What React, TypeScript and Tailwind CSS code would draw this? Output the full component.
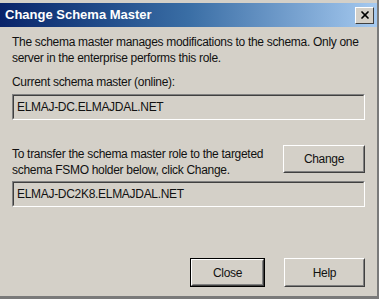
import { X } from 'lucide-react';

function Field({ value }: { value: string }) {
  return (
    <div className="h-[26px] border border-t-[#808080] border-l-[#808080] border-b-white border-r-white">
      <div className="flex h-full items-center border border-t-[#404040] border-l-[#404040] border-b-[#d4d0c8] border-r-[#d4d0c8] px-[3px] text-[12px] tracking-[-0.3px] text-[#111]">
        {value}
      </div>
    </div>
  );
}

function Btn({ label, isDefault = false, className = '' }: { label: string; isDefault?: boolean; className?: string }) {
  const inner = (
    <div className="h-full border border-t-white border-l-white border-b-[#404040] border-r-[#404040]">
      <div className="flex h-full items-center justify-center border border-t-[#d4d0c8] border-l-[#d4d0c8] border-b-[#808080] border-r-[#808080] text-[12px] tracking-[-0.3px] text-[#111]">
        {label}
      </div>
    </div>
  );
  return (
    <div className={className}>
      {isDefault ? <div className="h-full border border-black">{inner}</div> : inner}
    </div>
  );
}

export default function App() {
  return (
    <div className="h-[299px] w-[381px] bg-white font-['Liberation_Sans',Arial,sans-serif]">
      <div className="flex h-full w-[379px] flex-col border-r-2 border-b-[3px] border-r-[#7a7a7a] border-b-[#7a7a7a] bg-[#d4d0c8] pt-[3px]">
        <div className="flex h-[24px] items-center justify-between bg-gradient-to-r from-[#0a246a] via-[#3a6ea5] to-[#a6caf0] pl-[5px] pr-[3px]">
          <span className="text-[13px] font-bold text-white">Change Schema Master</span>
          <div className="h-[17px] w-[19px] border border-t-white border-l-white border-b-[#404040] border-r-[#404040] bg-[#d4d0c8]">
            <div className="flex h-full items-center justify-center">
              <X className="h-[12px] w-[12px] text-black" strokeWidth={3.5} />
            </div>
          </div>
        </div>

        <div className="flex flex-1 flex-col whitespace-nowrap px-[12px] pt-[7px] text-[12px] leading-[16px] tracking-[-0.3px] text-[#111]">
          <p>
            The schema master manages modifications to the schema. Only one
            <br />
            server in the enterprise performs this role.
          </p>
          <p className="mt-[8px]">Current schema master (online):</p>
          <div className="mt-[4px]">
            <Field value="ELMAJ-DC.ELMAJDAL.NET" />
          </div>

          <div className="mt-[25px] flex items-start justify-between">
            <p className="pt-[1px]">
              To transfer the schema master role to the targeted
              <br />
              schema FSMO holder below, click Change.
            </p>
            <Btn label="Change" className="h-[28px] w-[82px]" />
          </div>
          <div className="mt-[3px]">
            <Field value="ELMAJ-DC2K8.ELMAJDAL.NET" />
          </div>

          <div className="mt-auto mb-[9px] flex justify-end gap-[19px]">
            <Btn label="Close" isDefault className="h-[29px] w-[75px]" />
            <Btn label="Help" className="h-[29px] w-[81px]" />
          </div>
        </div>
      </div>
    </div>
  );
}
